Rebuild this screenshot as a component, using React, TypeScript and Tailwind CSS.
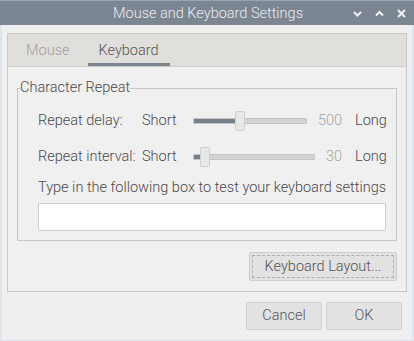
import React, { useState } from 'react';

const font = { fontFamily: 'Roboto, "Noto Sans", sans-serif' };

function Slider({ pct }: { pct: number }) {
  return (
    <div className="relative flex-1 h-[20px] flex items-center">
      <div className="w-full h-[6px] bg-[#d4d4d4] border border-[#c4c4c4] rounded-[1px] overflow-hidden">
        <div className="h-full bg-[#76818d]" style={{ width: `${pct}%` }} />
      </div>
      <div
        className="absolute top-0 w-[10px] h-[20px] bg-[#e8e8e6] border border-[#cfcfcf] rounded-[2px]"
        style={{ left: `calc(${pct}% - 5px)` }}
      />
    </div>
  );
}

function RepeatRow({ label, value, pct }: { label: string; value: string; pct: number }) {
  return (
    <div className="flex items-center h-[24px] whitespace-nowrap">
      <span className="w-[104px] shrink-0">{label}</span>
      <span className="w-[51px] shrink-0">Short</span>
      <Slider pct={pct} />
      <span className="ml-[11px] text-[#a6a6a6]">{value}</span>
      <span className="ml-[13px] w-[31px] shrink-0">Long</span>
    </div>
  );
}

export default function App() {
  const [tab, setTab] = useState('keyboard');
  const [text, setText] = useState('');

  return (
    <div style={font} className="w-[414px] h-[341px] bg-[#dce5ee] flex flex-col text-[14.5px] font-light text-[#4a4a4a] overflow-hidden">
      {/* title bar */}
      <div className="h-[25px] shrink-0 bg-[#7c8692] border-t border-[#98a6b4] flex items-center relative">
        <span className="flex-1 text-center text-[14.5px] text-[#e9ecef] pl-[2px] pt-[2px]">Mouse and Keyboard Settings</span>
        <div className="absolute right-[8px] top-[8px] flex items-center gap-[13px] text-[#f2f2f2]">
          <svg width="9" height="9" viewBox="0 0 9 9"><path d="M1 3 L4.5 6.5 L8 3" stroke="currentColor" strokeWidth="2" fill="none" /></svg>
          <svg width="9" height="9" viewBox="0 0 9 9"><path d="M1 6.5 L4.5 3 L8 6.5" stroke="currentColor" strokeWidth="2" fill="none" /></svg>
          <svg width="9" height="9" viewBox="0 0 9 9"><path d="M1 1 L8 8 M8 1 L1 8" stroke="currentColor" strokeWidth="2" fill="none" /></svg>
        </div>
      </div>

      {/* window body */}
      <div className="flex-1 mx-[2px] mb-[1px] bg-[#efefef] px-[5px] pt-[8px] flex flex-col">
        <div className="border border-[#c9c9c9] flex flex-col">
          <div className="h-[33px] bg-[#e1dfdc] border-b border-[#cfcdca] flex items-end pl-[7px] gap-[7px]">
            <button
              onClick={() => setTab('mouse')}
              className={`h-full px-[11px] pt-[4px] flex items-center border-b-[3px] ${tab === 'mouse' ? 'border-[#7a8591] text-[#555]' : 'border-transparent text-[#a0a0a0]'}`}
            >
              Mouse
            </button>
            <button
              onClick={() => setTab('keyboard')}
              className={`h-full px-[11px] pt-[4px] flex items-center border-b-[3px] ${tab === 'keyboard' ? 'border-[#7a8591] text-[#555]' : 'border-transparent text-[#a0a0a0]'}`}
            >
              Keyboard
            </button>
          </div>

          <div className="bg-[#f0f0f0] px-[9px] pt-[13px] pb-[10px] flex flex-col">
            <fieldset className="border border-[#c6c6c6]">
              <legend className="ml-[2px] leading-[16px]">Character Repeat</legend>
              <div className="flex flex-col pl-[20px] pr-[10px] pt-[13px] pb-[9px]">
                <RepeatRow label="Repeat delay:" value="500" pct={41} />
                <div className="h-[12px]" />
                <RepeatRow label="Repeat interval:" value="30" pct={10} />
                <div className="mt-[9px] leading-[20px] whitespace-nowrap">Type in the following box to test your keyboard settings</div>
                <input
                  value={text}
                  onChange={e => setText(e.target.value)}
                  className="mt-[5px] h-[28px] bg-white border border-[#cdcdcd] rounded-[1px] outline-none px-2"
                />
              </div>
            </fieldset>
            <div className="flex justify-end mt-[11px]">
              <button className="w-[148px] h-[29px] bg-[#e2e2e2] border border-[#cdcdcd] rounded-[2px] p-[2px]">
                <div className="h-full w-full border border-dashed border-[#adadad] flex items-center justify-center text-[#555]">
                  Keyboard Layout...
                </div>
              </button>
            </div>
          </div>
        </div>

        <div className="flex justify-end gap-[4px] mt-[10px] pr-[5px]">
          <button className="w-[76px] h-[28px] bg-[#e2e2e2] border border-[#d0d0d0] rounded-[2px] text-[#555]">Cancel</button>
          <button className="w-[76px] h-[28px] bg-[#e2e2e2] border border-[#d0d0d0] rounded-[2px] text-[#555]">OK</button>
        </div>
      </div>
    </div>
  );
}
